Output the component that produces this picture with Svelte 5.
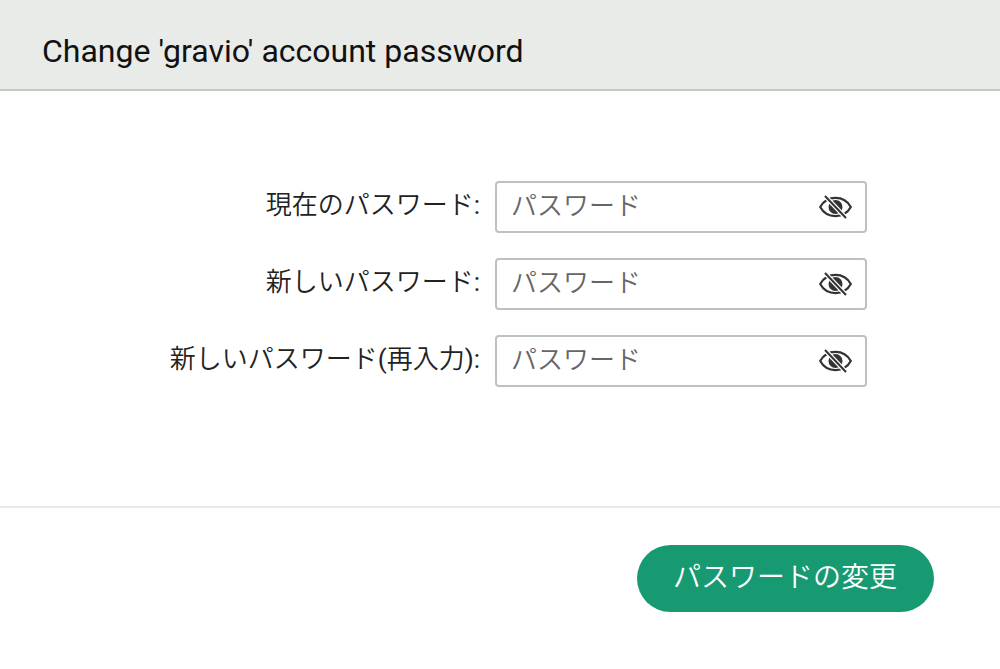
<script lang="ts">
    type Field = {
        id: string;
        label: string;
        autocomplete: "current-password" | "new-password";
        value: string;
        visible: boolean;
    };

    const account = "gravio";

    let fields = $state<Field[]>([
        {
            id: "current-password",
            label: "現在のパスワード:",
            autocomplete: "current-password",
            value: "",
            visible: false,
        },
        {
            id: "new-password",
            label: "新しいパスワード:",
            autocomplete: "new-password",
            value: "",
            visible: false,
        },
        {
            id: "confirm-password",
            label: "新しいパスワード(再入力):",
            autocomplete: "new-password",
            value: "",
            visible: false,
        },
    ]);

    const submit = (e: SubmitEvent) => {
        e.preventDefault();
    };
</script>

<main>
    <header>
        <h1>Change '{account}' account password</h1>
    </header>

    <form onsubmit={submit}>
        <div class="fields">
            {#each fields as field (field.id)}
                <label for={field.id}>{field.label}</label>
                <div class="password">
                    <input
                        id={field.id}
                        type={field.visible ? "text" : "password"}
                        placeholder="パスワード"
                        autocomplete={field.autocomplete}
                        bind:value={field.value}
                    />
                    <button
                        type="button"
                        class="toggle"
                        aria-label="パスワードを表示"
                        aria-pressed={field.visible}
                        onclick={() => (field.visible = !field.visible)}
                    >
                        <svg viewBox="0 0 34 24" aria-hidden="true">
                            <path
                                class="outline"
                                d="M1.2 12C4.500 6 10.500 2.900 16.500 2.900s12 3.100 15.300 9.100C28.500 18 22.500 21.100 16.500 21.100S4.500 18 1.200 12Z"
                            />
                            <circle cx="16.500" cy="12" r="7" />
                            {#if !field.visible}
                                <path class="gap" d="M6 1l21 22" />
                                <path class="slash" d="M6 1l21 22" />
                            {/if}
                        </svg>
                    </button>
                </div>
            {/each}
        </div>

        <footer>
            <button type="submit" class="submit">パスワードの変更</button>
        </footer>
    </form>
</main>

<style>
    :global(body) {
        background-color: #fff;
    }

    main {
        color: #222;
        font-family: Roboto, "Noto Sans CJK JP DemiLight", "Noto Sans CJK JP", sans-serif;
        font-size: 26px;
        font-weight: 400;
    }

    header {
        padding: 31px 42px 18px;
        background-color: #e8ebe8;
        border-bottom: 2px solid #c6c8c6;
    }

    h1 {
        margin: 0;
        color: #111;
        font-size: 32px;
        font-weight: 400;
        line-height: 40px;
    }

    .fields {
        display: grid;
        grid-template-columns: 480fr 505fr;
        align-items: center;
        gap: 25px 15px;
        padding: 90px 0 119px;
    }

    label {
        padding-bottom: 4px;
        line-height: 40px;
        text-align: right;
        white-space: nowrap;
    }

    .password {
        display: flex;
        align-items: center;
        box-sizing: border-box;
        width: 372px;
        height: 52px;
        padding: 0 12px 0 14px;
        border: 2px solid #c0c0c0;
        border-radius: 4px;
    }

    .password:focus-within {
        border-color: #179a72;
    }

    input {
        flex: 1;
        min-width: 0;
        height: 40px;
        padding: 0 0 2px;
        border: none;
        outline: none;
        background: none;
        color: inherit;
        font: inherit;
    }

    input::placeholder {
        color: #666;
        opacity: 1;
    }

    .toggle {
        display: flex;
        padding: 0;
        border: none;
        background: none;
        cursor: pointer;
    }

    svg {
        width: 34px;
        height: 24px;
        fill: #333;
    }

    .outline {
        fill: none;
        stroke: #333;
        stroke-width: 2.2;
    }

    .gap {
        stroke: #fff;
        stroke-width: 4.6;
    }

    .slash {
        stroke: #333;
        stroke-width: 2;
    }

    footer {
        display: flex;
        justify-content: flex-end;
        padding: 37px 66px 57px;
        border-top: 2px solid #e8e8e8;
    }

    .submit {
        padding: 13px 37px 14px 36px;
        border: none;
        border-radius: 34px;
        background-color: #179a72;
        color: #fff;
        font: inherit;
        font-size: 28px;
        line-height: 40px;
        cursor: pointer;
    }
</style>
